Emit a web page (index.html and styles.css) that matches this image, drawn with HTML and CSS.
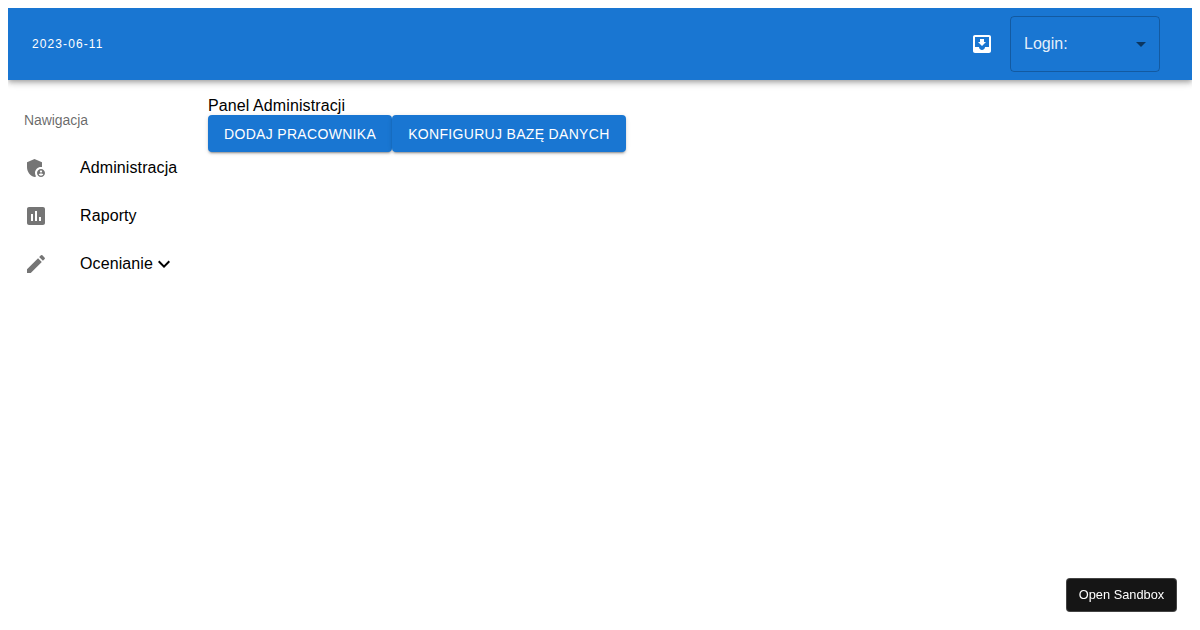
FILE: index.html
```html
<!DOCTYPE html>
<html lang="pl">
<head>
<meta charset="utf-8">
<title>Panel Administracji</title>
<link rel="stylesheet" href="styles.css">
</head>
<body>
<header class="appbar">
  <span class="date">2023-06-11</span>
  <div class="appbar-right">
    <svg class="icon inbox" viewBox="0 0 24 24"><path d="M19 3H4.99c-1.11 0-1.98.9-1.98 2L3 19c0 1.1.88 2 1.99 2H19c1.1 0 2-.9 2-2V5c0-1.1-.9-2-2-2zm0 12h-4c0 1.66-1.35 3-3 3s-3-1.34-3-3H4.99V5H19v10zm-3-5h-2V7h-4v3H8l4 4 4-4z"/></svg>
    <div class="select">
      <span>Login:</span>
      <svg class="icon arrow" viewBox="0 0 24 24"><path d="M7 10l5 5 5-5z"/></svg>
    </div>
  </div>
</header>
<div class="layout">
  <nav class="sidebar">
    <div class="subheader">Nawigacja</div>
    <div class="nav-item">
      <span class="nav-icon"><svg class="icon" viewBox="0 0 24 24"><path d="M17 11c.34 0 .67.04 1 .09V6.27L10.5 3 3 6.27v4.91c0 4.54 3.2 8.79 7.5 9.82.55-.13 1.08-.32 1.6-.55-.69-.98-1.1-2.17-1.1-3.45 0-3.31 2.69-6 6-6z"/><path d="M17 13c-2.21 0-4 1.79-4 4s1.79 4 4 4 4-1.79 4-4-1.79-4-4-4zm0 1.38c.62 0 1.12.51 1.12 1.12s-.51 1.12-1.12 1.12-1.12-.51-1.12-1.12.5-1.12 1.12-1.12zm0 5.37c-.93 0-1.74-.46-2.24-1.17.05-.72 1.51-1.08 2.24-1.08s2.19.36 2.24 1.08c-.5.71-1.31 1.17-2.24 1.17z"/></svg></span>
      <span>Administracja</span>
    </div>
    <div class="nav-item">
      <span class="nav-icon"><svg class="icon" viewBox="0 0 24 24"><path d="M19 3H5c-1.1 0-2 .9-2 2v14c0 1.1.9 2 2 2h14c1.1 0 2-.9 2-2V5c0-1.1-.9-2-2-2zM9 17H7v-7h2v7zm4 0h-2V7h2v10zm4 0h-2v-4h2v4z"/></svg></span>
      <span>Raporty</span>
    </div>
    <div class="nav-item">
      <span class="nav-icon"><svg class="icon" viewBox="0 0 24 24"><path d="M3 17.25V21h3.75L17.81 9.94l-3.75-3.75L3 17.25zM20.71 7.04c.39-.39.39-1.02 0-1.41l-2.34-2.34a.9959.9959 0 0 0-1.41 0l-1.83 1.83 3.75 3.75 1.83-1.83z"/></svg></span>
      <span>Ocenianie</span>
      <svg class="icon expand" viewBox="0 0 24 24"><path d="M16.59 8.59 12 13.17 7.41 8.59 6 10l6 6 6-6z"/></svg>
    </div>
  </nav>
  <main class="content">
    <div class="title">Panel Administracji</div>
    <div class="actions">
      <button class="btn">Dodaj pracownika</button>
      <button class="btn">Konfiguruj bazę danych</button>
    </div>
  </main>
</div>
<button class="sandbox">Open Sandbox</button>
</body>
</html>
```
FILE: styles.css
```css
* { box-sizing: border-box; }
html, body { height: 100%; }
body {
  margin: 8px;
  font-family: "Liberation Sans", Arial, sans-serif;
  font-size: 16px;
  letter-spacing: .1px;
  color: #000;
  background: #fff;
  overflow: hidden;
}
.icon { width: 24px; height: 24px; display: block; fill: currentColor; flex: none; }
.appbar {
  height: 72px;
  background: #1976d2;
  color: #fff;
  display: flex;
  align-items: center;
  justify-content: space-between;
  padding: 0 32px 0 24px;
  box-shadow: 0 2px 4px -1px rgba(0,0,0,.2), 0 4px 5px 0 rgba(0,0,0,.14), 0 1px 10px 0 rgba(0,0,0,.12);
}
.date { font-size: 12px; letter-spacing: 1.1px; line-height: 1; }
.appbar-right { display: flex; align-items: center; gap: 16px; }
.select {
  width: 150px;
  height: 56px;
  border: 1px solid rgba(0,0,0,.23);
  border-radius: 4px;
  display: flex;
  align-items: center;
  justify-content: space-between;
  padding: 0 6px 0 13px;
  color: rgba(255,255,255,.9);
  letter-spacing: 0;
}
.arrow { color: rgba(0,0,0,.54); }
.layout { display: flex; padding-top: 16px; }
.sidebar { width: 200px; flex: none; }
.subheader { height: 48px; line-height: 48px; padding-left: 16px; font-size: 14px; color: rgba(0,0,0,.6); letter-spacing: -.08px; }
.nav-item { height: 48px; display: flex; align-items: center; padding-left: 16px; }
.nav-icon { width: 56px; flex: none; color: rgba(0,0,0,.54); }
.expand { margin-left: -1px; }
.title { line-height: 19px; }
.actions { display: flex; }
.btn {
  height: 37px;
  padding: 0 16px;
  border: 0;
  border-radius: 4px;
  background: #1976d2;
  color: #fff;
  font-family: inherit;
  font-size: 14px;
  font-weight: 400;
  letter-spacing: .32px;
  text-transform: uppercase;
  box-shadow: 0 3px 1px -2px rgba(0,0,0,.2), 0 2px 2px 0 rgba(0,0,0,.14), 0 1px 5px 0 rgba(0,0,0,.12);
}
.sandbox {
  position: fixed;
  right: 23px;
  bottom: 18px;
  width: 111px;
  height: 34px;
  padding: 0 0 1px;
  border: 1px solid rgba(255,255,255,.2);
  border-radius: 4px;
  background: #151515;
  color: #fff;
  font-family: "Liberation Sans", sans-serif;
  font-size: 12.8px;
  letter-spacing: 0;
}
```
